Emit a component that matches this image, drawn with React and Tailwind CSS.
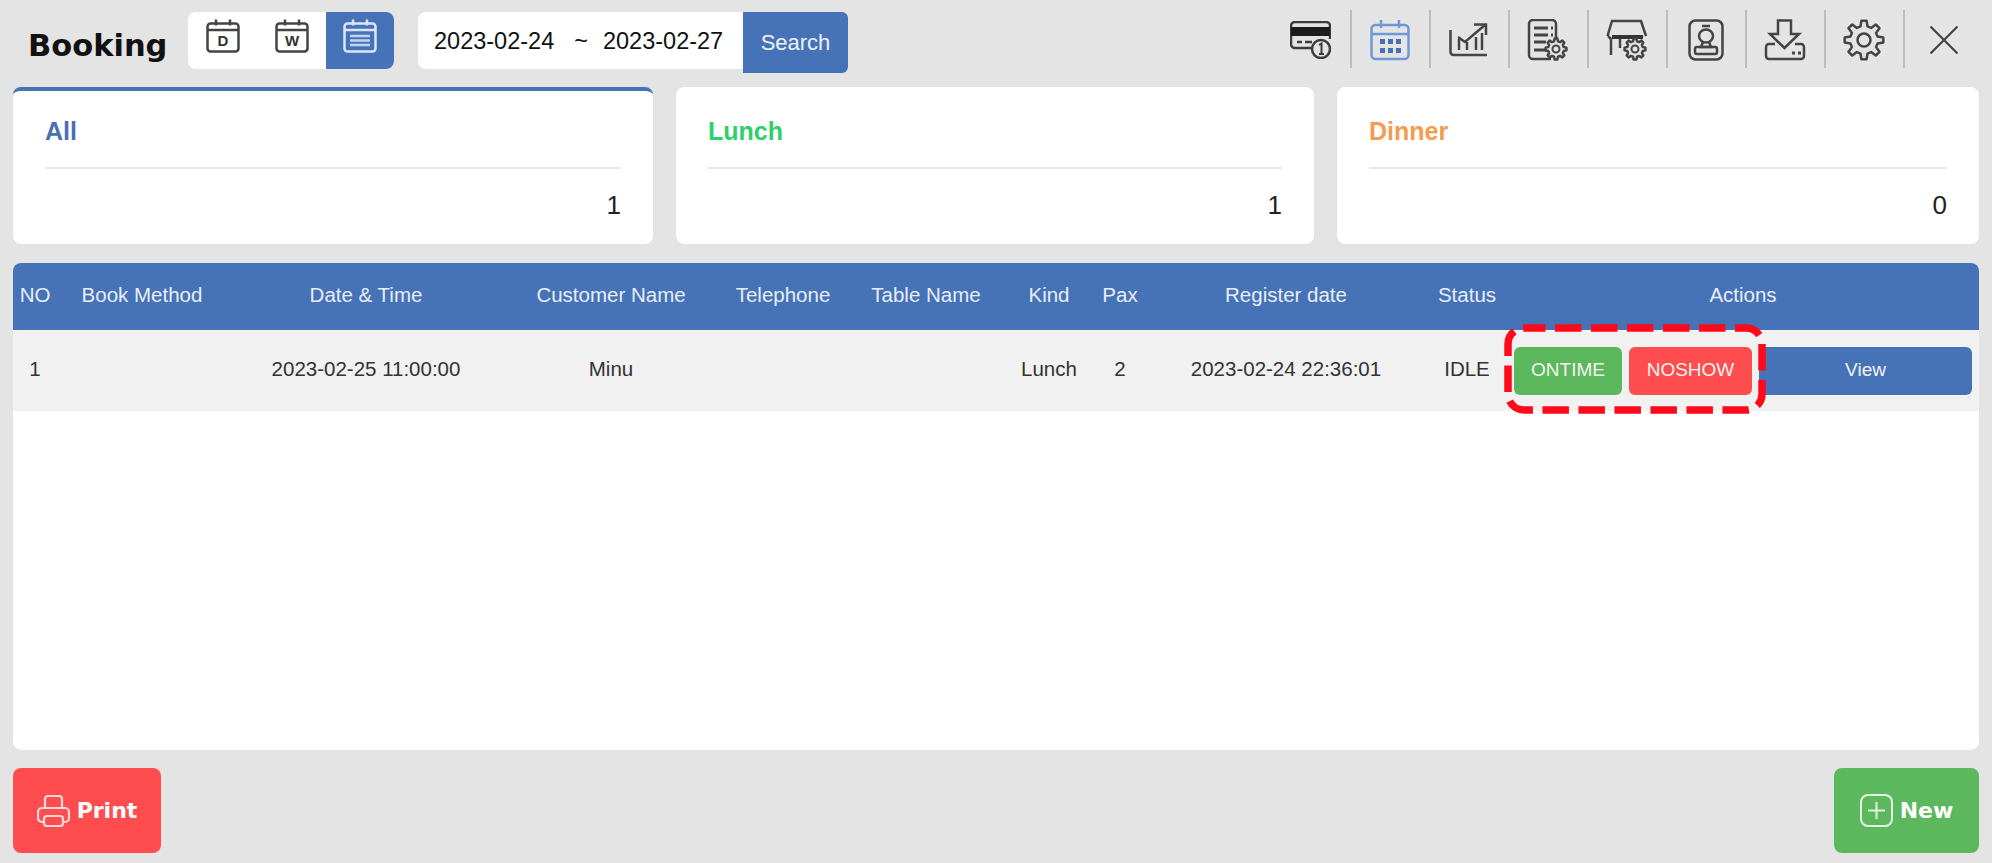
const ARIAL = { fontFamily: '"Liberation Sans", Arial, sans-serif' };
const DEJAVU = { fontFamily: '"DejaVu Sans", sans-serif' };
const cols = "grid grid-cols-[44px_170px_278px_212px_132px_154px_92px_50px_282px_80px_1fr]";
const dark = "#444";

const headers = ["NO", "Book Method", "Date & Time", "Customer Name", "Telephone", "Table Name", "Kind", "Pax", "Register date", "Status", "Actions"];
const row = ["1", "", "2023-02-25 11:00:00", "Minu", "", "", "Lunch", "2", "2023-02-24 22:36:01", "IDLE"];

function CalendarIcon({ color = dark, children }) {
  return (
    <svg width="34" height="34" viewBox="0 0 34 34" fill="none" stroke={color} strokeWidth="2.500">
      <rect x="1.500" y="4.500" width="31" height="28" rx="3" />
      <path d="M1.500 11h31M10 0.500v6M24 0.500v6" />
      {children}
    </svg>
  );
}

function CardIcon() {
  return (
    <svg width="41" height="38" viewBox="0 0 41 38" fill="none" stroke="#3c3c3c" strokeWidth="2.500">
      <path d="M28 27H5a4 4 0 0 1-4-4V5a4 4 0 0 1 4-4h31a4 4 0 0 1 4 4v13" />
      <rect x="1" y="6" width="39" height="9" fill="#1c1c1c" stroke="none" />
      <path d="M7 21h5M15 21h7" />
      <circle cx="31" cy="28" r="9" fill="#e4e4e4" />
      <path d="M29 24l2.500-1.500V33M29 33h5" strokeWidth="2" />
    </svg>
  );
}

function PlanIcon() {
  return (
    <svg width="40" height="42" viewBox="0 0 40 42" fill="none" stroke="#6f96d6" strokeWidth="2.500">
      <rect x="1.500" y="6" width="37" height="34" rx="4" />
      <path d="M1.500 15h37M11 1v8M29 1v8" />
      <g fill="#4672b7" stroke="none">
        <rect x="10" y="20" width="5" height="5" />
        <rect x="18" y="20" width="5" height="5" />
        <rect x="26" y="20" width="5" height="5" />
        <rect x="10" y="29" width="5" height="5" />
        <rect x="18" y="29" width="5" height="5" />
        <rect x="26" y="29" width="5" height="5" />
      </g>
    </svg>
  );
}

function ChartIcon() {
  return (
    <svg width="40" height="36" viewBox="0 0 40 36" fill="none" stroke={dark} strokeWidth="2.500">
      <path d="M1.500 8v22a3 3 0 0 0 3 3H38" />
      <path d="M9 15l7 5L36 3" />
      <path d="M25 2.500h12V13" />
      <path d="M10 28V17M18 28V20M27 28V15M33 28V11" />
    </svg>
  );
}

function gearPoints(cx, cy, outer, root, teeth) {
  const pts = [];
  const step = (Math.PI * 2) / teeth;
  for (let i = 0; i < teeth; i++) {
    const a = i * step - Math.PI / 2;
    [[-0.32, root], [-0.17, outer], [0.17, outer], [0.32, root]].forEach(([k, r]) => {
      pts.push(`${(cx + r * Math.cos(a + k * step)).toFixed(2)},${(cy + r * Math.sin(a + k * step)).toFixed(2)}`);
    });
  }
  return pts.join(" ");
}

function SmallGear({ cx, cy }) {
  return (
    <g>
      <polygon points={gearPoints(cx, cy, 10.500, 8, 8)} fill="#e4e4e4" stroke={dark} strokeWidth="2.500" strokeLinejoin="round" />
      <circle cx={cx} cy={cy} r="3.500" fill="none" stroke={dark} strokeWidth="2" />
    </g>
  );
}

function ReportIcon() {
  return (
    <svg width="42" height="42" viewBox="0 0 42 42" fill="none" stroke={dark} strokeWidth="2.500">
      <path d="M24 40H6a4 4 0 0 1-4-4V5a4 4 0 0 1 4-4h19a4 4 0 0 1 4 4v17" />
      <path d="M7 9h14M24 9h2M7 16h14M24 16h2M7 23h12M7 31h14" strokeWidth="3" />
      <SmallGear cx={29} cy={30} />
    </svg>
  );
}

function TableIcon() {
  return (
    <svg width="42" height="42" viewBox="0 0 42 42" fill="none" stroke={dark} strokeWidth="2.500">
      <path d="M1.500 17L6 2h29l5 15" />
      <rect x="6" y="16" width="31" height="4" fill="#333" stroke="none" />
      <path d="M2 17l3 3v16M14 20v9" />
      <SmallGear cx={29} cy={30} />
    </svg>
  );
}

function PersonIcon() {
  return (
    <svg width="36" height="42" viewBox="0 0 36 42" fill="none" stroke={dark} strokeWidth="2.500">
      <rect x="1.500" y="1.500" width="33" height="39" rx="6" />
      <path d="M14 7h8" />
      <ellipse cx="18" cy="17" rx="7" ry="6.500" />
      <path d="M15 23l-2 5h10l-2-5" />
      <rect x="7" y="28" width="22" height="7" rx="2" />
    </svg>
  );
}

function DownloadIcon() {
  return (
    <svg width="42" height="42" viewBox="0 0 42 42" fill="none" stroke={dark} strokeWidth="2.500">
      <path d="M14 1.500h13V15h8L20.500 29 6 15h8z" />
      <path d="M11 25H5a3 3 0 0 0-3 3v9a3 3 0 0 0 3 3h32a3 3 0 0 0 3-3v-9a3 3 0 0 0-3-3h-6" />
      <path d="M28 34h3M34 34h3" strokeWidth="3" />
    </svg>
  );
}

function GearIcon() {
  return (
    <svg width="42" height="42" viewBox="0 0 42 42" fill="none" stroke={dark} strokeWidth="2.500">
      <polygon points={gearPoints(21, 21, 19.500, 14, 8)} strokeLinejoin="round" />
      <circle cx="21" cy="21" r="6.500" />
    </svg>
  );
}

function CloseIcon() {
  return (
    <svg width="30" height="30" viewBox="0 0 30 30" fill="none" stroke={dark} strokeWidth="2.200">
      <path d="M1.500 1.500l27 27M28.500 1.500l-27 27" />
    </svg>
  );
}

const tools = [CardIcon, PlanIcon, ChartIcon, ReportIcon, TableIcon, PersonIcon, DownloadIcon, GearIcon, CloseIcon];

function SummaryCard({ label, color, value, active }) {
  return (
    <div className={`h-[157px] rounded-lg bg-white px-8 shadow-[0_0_1px_rgba(0,0,0,0.1)] ${active ? "border-t-[4px] border-[#4672b7]" : "pt-[4px]"}`}>
      <div className={`h-[78px] border-b-2 border-[#e8e8e8] pt-[22px] text-[25px] font-bold leading-[36px] ${color}`}>{label}</div>
      <div className="pt-[18px] text-right text-[26px] leading-[36px] text-[#222]">{value}</div>
    </div>
  );
}

export default function App() {
  return (
    <div style={ARIAL} className="flex h-screen w-full flex-col bg-[#e4e4e4] px-[13px] text-[#222]">
      {/* top bar */}
      <div className="flex h-[87px] shrink-0 items-start pt-3">
        <div style={DEJAVU} className="w-[175px] pl-[15px] pt-4 text-[30.500px] font-bold leading-9 text-[#111]">
          Booking
        </div>
        <div className="flex h-[57px] overflow-hidden rounded-lg bg-white">
          <div className="flex w-[69px] items-start justify-center pt-[7px]">
            <CalendarIcon>
              <text x="17" y="27" textAnchor="middle" fontSize="15" fontWeight="700" fill="#333" stroke="none">D</text>
            </CalendarIcon>
          </div>
          <div className="flex w-[69px] items-start justify-center pt-[7px]">
            <CalendarIcon>
              <text x="17" y="27" textAnchor="middle" fontSize="15" fontWeight="700" fill="#333" stroke="none">W</text>
            </CalendarIcon>
          </div>
          <div className="flex w-[68px] items-start justify-center bg-[#4672b7] pt-[7px]">
            <CalendarIcon color="#dbe7f8">
              <path d="M7 17h20M7 21.500h20M7 26h20" stroke="#c3d4ee" strokeWidth="2.500" />
            </CalendarIcon>
          </div>
        </div>
        <div className="ml-6 flex items-start">
          <div className="flex h-[57px] w-[325px] items-center rounded-l-lg bg-white pl-4 pt-[2px] text-[23.500px] text-[#111]">
            <span>2023-02-24</span>
            <span className="ml-5">~</span>
            <span className="ml-[15px]">2023-02-27</span>
          </div>
          <button className="h-[61px] w-[105px] rounded-r-md bg-[#4672b7] text-[22px] text-[#eef3fb]">Search</button>
        </div>
        <div className="-mt-[2px] ml-auto mr-[-5px] flex h-[58px] items-stretch">
          {tools.map((Icon, i) => (
            <div key={i} className={`flex w-[79px] items-center justify-center pr-[2px] pt-[2px] ${i < tools.length - 1 ? "border-r-2 border-[#bcbcbc]" : ""}`}>
              <Icon />
            </div>
          ))}
        </div>
      </div>

      {/* summary */}
      <div className="grid shrink-0 grid-cols-[640px_638px_1fr] gap-x-[23px]">
        <SummaryCard label="All" color="text-[#4a6fb5]" value="1" active />
        <SummaryCard label="Lunch" color="text-[#2fd06c]" value="1" />
        <SummaryCard label="Dinner" color="text-[#f39c4f]" value="0" />
      </div>

      {/* list */}
      <div className="mt-[19px] flex min-h-0 flex-1 flex-col overflow-hidden rounded-lg bg-white shadow-[0_0_1px_rgba(0,0,0,0.1)]">
        <div className={`${cols} h-[67px] items-center bg-[#4672b7] pb-[2px] text-center text-[20.500px] text-[#e8eef8]`}>
          {headers.map((h) => (
            <div key={h}>{h}</div>
          ))}
        </div>
        <div className={`${cols} relative h-[81px] items-center bg-[#f1f1f1] text-center text-[20.500px] text-[#333]`}>
          {row.map((v, i) => (
            <div key={i} className="pb-[3px]">{v}</div>
          ))}
          <div className="flex gap-[7px] px-[7px] text-[19px] text-[#f1f4f1]">
            <button className="h-12 w-[108px] rounded-md bg-[#5cb85c]">ONTIME</button>
            <button className="h-12 w-[123px] rounded-md bg-[#ff4d4f]">NOSHOW</button>
            <button className="h-12 flex-1 rounded-md bg-[#4672b7]">View</button>
          </div>
          {/* callout drawn on top of the action buttons */}
          <svg className="pointer-events-none absolute left-[1491px] top-[-6px]" width="262" height="90" viewBox="0 0 262 90" fill="none">
            <rect x="4" y="4" width="254" height="82" rx="16" stroke="#fe0a1b" strokeWidth="7.500" strokeDasharray="26.500 9.500" strokeDashoffset="5" />
          </svg>
        </div>
      </div>

      {/* footer */}
      <div style={DEJAVU} className="flex h-[113px] shrink-0 items-start justify-between pt-[18px] text-[22px] font-bold text-white">
        <button className="flex h-[85px] w-[148px] items-center justify-center gap-[7px] rounded-lg bg-[#ff4d4f]">
          <svg width="33" height="32" viewBox="0 0 33 32" fill="none" stroke="#ffd9da" strokeWidth="2.200">
            <path d="M8 13V4a3 3 0 0 1 3-3h11a3 3 0 0 1 3 3v9" />
            <path d="M7 27H5a4 4 0 0 1-4-4v-6a4 4 0 0 1 4-4h23a4 4 0 0 1 4 4v6a4 4 0 0 1-4 4h-2" />
            <rect x="7" y="21" width="19" height="10" rx="3" />
          </svg>
          Print
        </button>
        <button className="flex h-[85px] w-[145px] items-center justify-center gap-[7px] rounded-lg bg-[#5cb85c]">
          <svg width="33" height="33" viewBox="0 0 33 33" fill="none" stroke="#e3f4e3" strokeWidth="2">
            <rect x="1" y="1" width="31" height="31" rx="7" />
            <path d="M16.500 8v17M8 16.500h17" />
          </svg>
          New
        </button>
      </div>
    </div>
  );
}
